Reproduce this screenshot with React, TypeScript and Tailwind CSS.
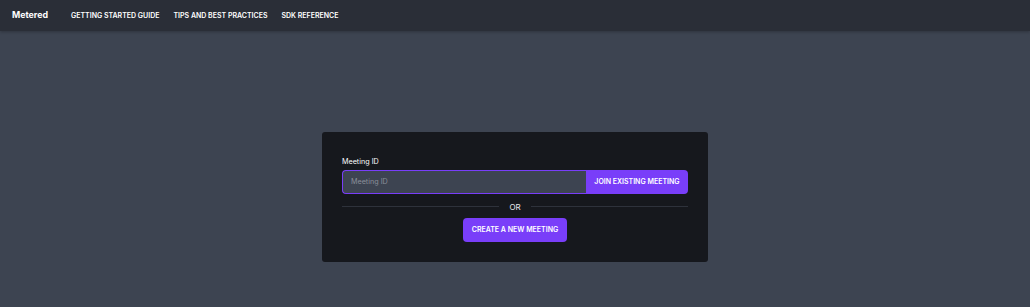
export default function App() {
  const links = ['GETTING STARTED GUIDE', 'TIPS AND BEST PRACTICES', 'SDK REFERENCE'];

  return (
    <div className="min-h-screen bg-[#3d4451] font-['Inter','Liberation_Sans',sans-serif] text-white">
      <nav className="flex h-[31px] items-center bg-[#2a2e37] px-3 shadow-[0_1px_3px_rgba(0,0,0,0.25)]">
        <a className="mr-[23px] text-[8.8px] font-bold leading-none">Metered</a>
        <div className="flex gap-[14px]">
          {links.map((l) => (
            <a key={l} className="text-[7px] font-semibold leading-none">
              {l}
            </a>
          ))}
        </div>
      </nav>

      <div className="pt-[101px]">
        <div className="mx-auto w-[386px] rounded-[3px] bg-[#16181d] px-5 pb-[20px] pt-[25px]">
          <label className="block text-[7.2px] leading-[10px]">Meeting ID</label>
          <div className="mt-[3px] flex h-[24px]">
            <input
              placeholder="Meeting ID"
              className="min-w-0 flex-1 rounded-l-[4px] border border-r-0 border-[#793ef9] bg-[#3d4451] px-2 text-[7.2px] text-white outline-none placeholder:text-[#8a8f9a]"
            />
            <button className="rounded-r-[4px] bg-[#793ef9] px-[8.5px] text-[7px] font-semibold">
              JOIN EXISTING MEETING
            </button>
          </div>
          <div className="mt-[6px] flex h-[13px] items-center gap-[10px]">
            <div className="h-px flex-1 bg-[#2e323b]" />
            <span className="text-[8px] leading-none text-[#e6e7ea]">OR</span>
            <div className="h-px flex-1 bg-[#2e323b]" />
          </div>
          <div className="mt-[5px] flex justify-center">
            <button className="h-[24px] rounded-[4px] bg-[#793ef9] px-[8.5px] text-[7px] font-semibold">
              CREATE A NEW MEETING
            </button>
          </div>
        </div>
      </div>
    </div>
  );
}
